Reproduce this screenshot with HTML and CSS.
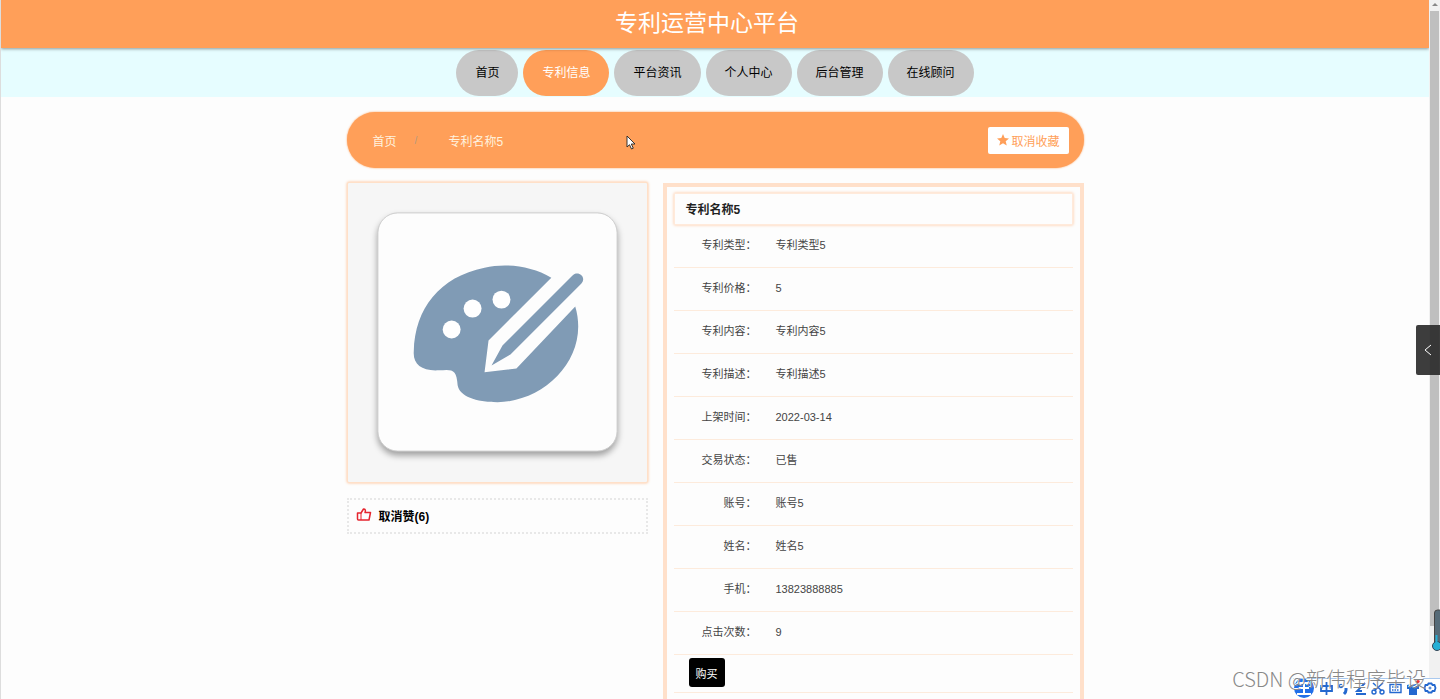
FILE: index.html
```html
<!DOCTYPE html>
<html lang="zh-CN">
  <head>
    <meta charset="UTF-8" />
    <meta name="viewport" content="width=device-width, initial-scale=1.0" />
    <title>专利运营中心平台</title>
    <link rel="stylesheet" href="styles.css">
  </head>
  <body>
    <div class="page">
      <header class="header">
        <h1>专利运营中心平台</h1>
      </header>

      <nav class="nav">
        <a href="#">首页</a>
        <a href="#" class="active">专利信息</a>
        <a href="#">平台资讯</a>
        <a href="#">个人中心</a>
        <a href="#">后台管理</a>
        <a href="#">在线顾问</a>
      </nav>

      <main class="container">
        <div class="breadcrumb">
          <a href="#">首页</a>
          <span class="separator">/</span>
          <a href="#">专利名称5</a>
          <button type="button" class="btn-collect">
            <svg width="12" height="12" viewBox="0 0 24 24"><path d="M12 0l3.400 8.200 8.600.6-6.600 5.700 2.100 8.700L12 18.500l-7.500 4.700 2.100-8.700L0 8.800l8.600-.6z" fill="currentColor"/></svg>
            取消收藏
          </button>
        </div>

        <div class="detail">
          <div class="detail-left">
            <div class="cover">
              <svg viewBox="0 0 300 300" role="img" aria-label="专利图片">
                <rect class="tile" x="30" y="30" width="240" height="239" rx="20" />
                <path fill="#809bb5" d="M204 95C184 83 158 80 137 85C92 94 67 126 66 169C65 182 74 189 91 188C104 187 109 186 110 203C112 214 128 220 150 220C199 219 243 174 228 124L169 186L137 190L141 158Z" />
                <path fill="#809bb5" d="M144 183L155 163L225 93C231 87 240 95 234 101L163 172Z" />
                <circle cx="104" cy="147" r="9" fill="#fff" />
                <circle cx="125" cy="126" r="9" fill="#fff" />
                <circle cx="154" cy="117" r="9" fill="#fff" />
              </svg>
            </div>
            <button type="button" class="like">
              <svg width="16" height="14" viewBox="0 0 16 14" fill="none" stroke="#e5252f" stroke-width="1.500" stroke-linejoin="round"><path d="M1.500 5H5L7.500 1C9.500 1 9.800 2.500 9 4.500H14.500L13 12H2.500Q1.500 12 1.500 11Z"/><path d="M5 5V12" stroke-width="1"/></svg>
              取消赞(6)
            </button>
          </div>

          <div class="detail-right">
            <h2>专利名称5</h2>
            <dl>
              <div class="row"><dt>专利类型：</dt><dd>专利类型5</dd></div>
              <div class="row"><dt>专利价格：</dt><dd>5</dd></div>
              <div class="row"><dt>专利内容：</dt><dd>专利内容5</dd></div>
              <div class="row"><dt>专利描述：</dt><dd>专利描述5</dd></div>
              <div class="row"><dt>上架时间：</dt><dd>2022-03-14</dd></div>
              <div class="row"><dt>交易状态：</dt><dd>已售</dd></div>
              <div class="row"><dt>账号：</dt><dd>账号5</dd></div>
              <div class="row"><dt>姓名：</dt><dd>姓名5</dd></div>
              <div class="row"><dt>手机：</dt><dd>13823888885</dd></div>
              <div class="row"><dt>点击次数：</dt><dd>9</dd></div>
            </dl>
            <div class="actions">
              <button type="button" class="btn-buy">购买</button>
            </div>
          </div>
        </div>
      </main>
    </div>

    <div class="scrollbar">
      <svg width="10" height="11" viewBox="0 0 10 11"><path d="M2 6l3-3 3 3z" fill="#888"/></svg>
      <div class="thumb"></div>
    </div>

    <button type="button" class="side-tab" aria-label="展开">
      <svg width="8" height="12" viewBox="0 0 8 12" fill="none" stroke="#fff"><path d="M7 1L1 6l6 5"/></svg>
    </button>

    <svg class="cursor" width="10" height="15" viewBox="0 0 10 15"><path d="M1 1v11l2.500-2.300 2 4.300 1.800-.8-2-4.200H9z" fill="#fff" stroke="#222" stroke-width=".9"/></svg>

    <svg class="gauge" width="8" height="44" viewBox="0 0 8 44">
      <rect x="2.500" y="1" width="8" height="36" rx="3" fill="#566b78" stroke="#444"/>
      <circle cx="5" cy="37" r="4.500" fill="#25afd5" stroke="#345"/>
      <path d="M4.500 26v9" stroke="#25afd5" stroke-width="2"/>
    </svg>

    <!-- 输入法工具栏 -->
    <div class="ime">
      <svg width="147" height="20" viewBox="0 0 147 20" fill="none" stroke="#2468cf" stroke-width="1.800">
        <circle cx="11" cy="9" r="10" fill="#216fe8" stroke="none"/>
        <path d="M5 4h12M6 9h10M4 15h14M11 4v11" stroke="#fff" stroke-width="2"/>
        <path d="M28 7h11v5H28zM33.500 3v13"/>
        <circle cx="48" cy="7" r="1.500" stroke-width="1.400"/>
        <path d="M53 9v2q0 2-2 4" stroke-width="3"/>
        <path d="M72 4l-8 8h5M63 15h10"/>
        <path d="M80 4l9 8M90 4l-9 8" stroke-width="1.500"/>
        <circle cx="81" cy="13" r="2" stroke-width="1.400"/>
        <circle cx="89" cy="13" r="2" stroke-width="1.400"/>
        <path d="M97 5.500h11v8H97z" stroke-width="1.400"/>
        <path d="M99 8h7M99 11h7" stroke-width="1.400" stroke-dasharray="1.500 1"/>
        <path d="M114 6l4-1q2 2 4 0l4 1v4h-2v6h-8v-6h-2z" fill="#2468cf" stroke="none"/>
        <circle cx="125" cy="3" r="2" fill="#e33" stroke="none"/>
        <path d="M135.500 4.500h3l1 1.500h2l1 3-1 3h-2l-1 1.500h-3l-1-1.500h-2l-1-3 1-3h2z"/>
        <circle cx="137" cy="9" r="1" stroke-width="1"/>
      </svg>
    </div>
    <div class="watermark">CSDN @新伟程序毕设</div>
  </body>
</html>
```
FILE: styles.css
```css
* {
  box-sizing: border-box;
}

body {
  margin: 0;
  display: flex;
  height: 100vh;
  overflow: hidden;
  background: #fdfdfd;
  color: #333;
  font-family: "Liberation Sans", "Noto Sans CJK SC", sans-serif;
  font-size: 12px;
}

h1,
h2,
dl,
dd {
  margin: 0;
}

a {
  text-decoration: none;
}

button {
  font-family: inherit;
  font-size: 12px;
  cursor: pointer;
}

.page {
  flex: 1;
  overflow: hidden;
  border-left: 1px solid #ddd;
}

.header {
  position: relative;
  height: 48px;
  padding-right: 16px;
  background: #ff9f59;
  box-shadow: 0 1px 3px rgba(0, 0, 0, 0.4);
  text-align: center;
}

.header h1 {
  color: #fff;
  font-size: 23px;
  font-weight: 400;
  line-height: 47px;
}

.nav {
  display: flex;
  justify-content: center;
  gap: 5px;
  height: 49px;
  padding-top: 2px;
  background: #e6fdff;
}

.nav a {
  height: 46px;
  padding: 0 19px;
  border-radius: 23px;
  background: #c8c8c8;
  color: #000;
  line-height: 46px;
}

.nav a.active {
  background: #ff9f59;
  color: #fff;
}

.container {
  max-width: 737px;
  margin: 15px auto 0;
}

.breadcrumb {
  display: flex;
  align-items: center;
  height: 56px;
  padding: 0 15px 0 26px;
  border-radius: 28px;
  background: #ff9f59;
  box-shadow: 0 0 2px #ff9f59;
}

.breadcrumb a {
  color: #fff3df;
}

.separator {
  width: 52px;
  padding-left: 18px;
  color: #b59a80;
  font-size: 10px;
}

.btn-collect {
  display: flex;
  align-items: center;
  gap: 2px;
  height: 27px;
  margin-left: auto;
  padding: 0 9px;
  border: none;
  border-radius: 2px;
  background: #fff;
  color: #ff9f59;
}

.detail {
  display: flex;
  align-items: flex-start;
  gap: 15px;
  margin-top: 14px;
}

.detail-left {
  flex: 0 0 301px;
}

.cover {
  border: 1px solid #ffe0c8;
  border-radius: 2px;
  background: #f6f6f6;
  box-shadow: 0 0 3px #ffb988;
}

.cover svg {
  display: block;
  width: 100%;
}

.tile {
  fill: #fdfdfd;
  stroke: #ccc;
  filter: drop-shadow(0 4px 3px rgba(0, 0, 0, 0.35));
}

.like {
  display: flex;
  align-items: center;
  gap: 7px;
  width: 100%;
  height: 36px;
  margin-top: 15px;
  padding: 0 7px 2px;
  border: 2px dotted #e8e8e8;
  background: none;
  color: #000;
  font-weight: 700;
}

.detail-right {
  flex: 1;
  margin-top: 1px;
  padding: 6px 7px 20px;
  border: 4px solid #ffe0ca;
}

.detail-right h2 {
  height: 32px;
  padding-left: 11px;
  border: 1px solid #ffeadb;
  box-shadow: 0 0 3px #ffc59c;
  color: #222;
  font-size: 12px;
  line-height: 32px;
}

.row {
  display: flex;
  height: 43px;
  border-bottom: 1px solid #fdebdc;
  color: #444;
  font-size: 11px;
  line-height: 41px;
}

dt {
  width: 83px;
  text-align: right;
}

dd {
  padding-left: 19px;
}

.actions {
  height: 38px;
  padding: 3px 15px;
  border-bottom: 1px solid #fdebdc;
}

.btn-buy {
  height: 29px;
  padding: 0 7px;
  border: none;
  border-radius: 3px;
  background: #000;
  color: #fff;
  font-size: 11px;
}

.scrollbar {
  width: 11px;
  padding-left: 1px;
  background: #f1f1f1;
}

.scrollbar svg {
  display: block;
}

.thumb {
  width: 9px;
  height: 88%;
  background: #bfbfbf;
}

.side-tab {
  position: absolute;
  top: 325px;
  right: 0;
  display: flex;
  align-items: center;
  justify-content: center;
  width: 24px;
  height: 50px;
  padding: 0;
  border: none;
  border-radius: 2px 0 0 2px;
  background: rgba(40, 40, 40, 0.9);
}

.cursor {
  position: absolute;
  top: 135px;
  left: 626px;
}

.gauge {
  position: absolute;
  right: 0;
  bottom: 46px;
}

.ime {
  position: absolute;
  right: 0;
  bottom: 0;
  height: 21px;
  border-top: 1px solid #a9c9ef;
  background: #fff;
}

.ime svg {
  display: block;
}

.watermark {
  position: absolute;
  right: 14px;
  bottom: 6px;
  color: #888;
  font-family: "Noto Sans CJK SC", sans-serif;
  font-size: 20px;
  font-weight: 300;
  line-height: 28px;
  text-shadow: -1px -1px 0 #fff;
}
```
